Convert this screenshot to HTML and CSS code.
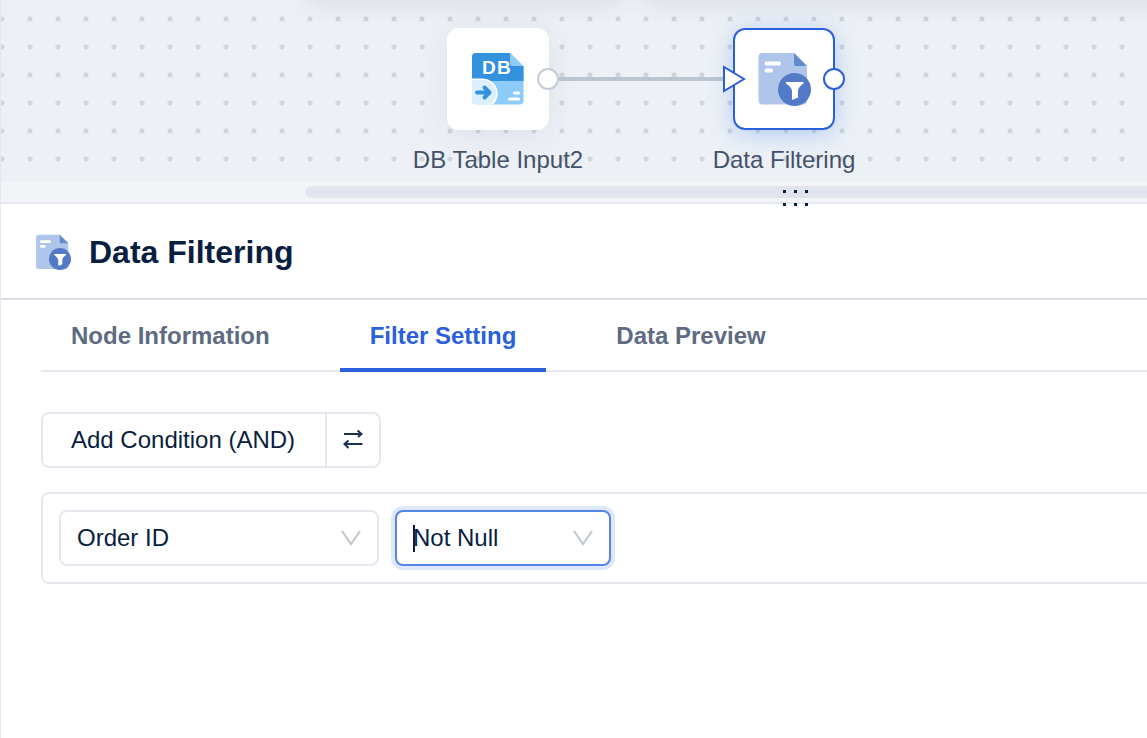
FILE: index.html
```
<!DOCTYPE html>
<html lang="en">
<head>
<meta charset="utf-8">
<title>Data Filtering</title>
<link rel="stylesheet" href="styles.css">
</head>
<body>
<svg class="defs" aria-hidden="true">
  <symbol id="icon-filter-file" viewBox="0 0 54 54">
    <path d="M6 1H37L50 14V48.5a4 4 0 0 1-4 4H5.500a4 4 0 0 1-4-4V5a4 4 0 0 1 4-4z" fill="#afc5e9"/>
    <path d="M37 1L50 14H39a2 2 0 0 1-2-2z" fill="#6489cd"/>
    <path d="M9.500 11.500H22M9.500 18.500H14" stroke="#fff" stroke-width="4" stroke-linecap="round"/>
    <circle cx="37.500" cy="37.500" r="16.500" fill="#537ac6"/>
    <path d="M29 30H46.500V31.500Q41 35 41 39V45.500L35 48V39Q34.500 35 29 31.500z" fill="#fff"/>
  </symbol>
</svg>
<div class="app">
  <section class="canvas" aria-label="Flow canvas">
    <div class="toolbar-shadow toolbar-shadow-left"></div>
    <div class="toolbar-shadow toolbar-shadow-right"></div>
    <div class="edge"></div>
    <div class="node node-input">
      <div class="node-box">
        <svg class="node-icon" viewBox="0 0 54 54" aria-hidden="true">
          <clipPath id="file-clip"><path d="M5 1H39.500L52.500 14V48.500a4 4 0 0 1-4 4H5a4 4 0 0 1-4-4V5a4 4 0 0 1 4-4z"/></clipPath>
          <g clip-path="url(#file-clip)">
            <path d="M0 0H54V54H0z" fill="#8dcbf8"/>
            <path d="M0 0H39V12a2 2 0 0 0 2 2H54V29H0z" fill="#3391dd"/>
            <path d="M0 26.500H11a15 15 0 0 1 9 27.500H0z" fill="#fff"/>
            <path d="M0 28H11a13 13 0 0 1 6 25H0z" fill="#dbf0fe"/>
          </g>
          <path d="M6 40.500H18M13.500 35.500L18.500 40.500L13.500 45.500" fill="none" stroke="#3391dd" stroke-width="4" stroke-linecap="round" stroke-linejoin="round"/>
          <path d="M43.500 41H47.500M38.500 47H47.500" stroke="#fff" stroke-width="3" stroke-linecap="round"/>
          <text class="db-text" x="11 26" y="22">DB</text>
        </svg>
        <span class="port port-out"></span>
      </div>
      <span class="node-label">DB Table Input2</span>
    </div>
    <div class="node node-filter">
      <div class="node-box node-box-active">
        <svg class="node-icon" aria-hidden="true"><use href="#icon-filter-file"/></svg>
        <svg class="port-in" viewBox="0 0 24 28" aria-hidden="true"><path d="M2 2V26L22 14z" fill="#fff" stroke="#2a5fdd" stroke-width="2"/></svg>
        <span class="port port-out port-active"></span>
      </div>
      <span class="node-label">Data Filtering</span>
    </div>
    <div class="scroll-track"><div class="scroll-thumb"></div></div>
    <div class="drag-handle"><i></i><i></i><i></i><i></i><i></i><i></i></div>
  </section>

  <main class="panel">
    <header class="panel-header">
      <svg class="panel-icon" aria-hidden="true"><use href="#icon-filter-file"/></svg>
      <h1 class="panel-title">Data Filtering</h1>
    </header>
    <div class="panel-body">
      <div class="tabs" role="tablist">
        <button class="tab" type="button" role="tab" aria-selected="false">Node Information</button>
        <button class="tab tab-active" type="button" role="tab" aria-selected="true">Filter Setting</button>
        <button class="tab" type="button" role="tab" aria-selected="false">Data Preview</button>
      </div>
      <div class="condition-actions">
        <button class="btn-add" type="button">Add Condition (AND)</button>
        <button class="btn-swap" type="button" aria-label="Switch AND / OR">
          <svg class="swap-icon" viewBox="0 0 20 20" aria-hidden="true"><path d="M1 4H18.500M14.500 0.500L18.500 4L15 7M19.500 14H1.500M5.500 10.500L1.500 14L5.500 18" fill="none" stroke="#1d3050" stroke-width="2"/></svg>
        </button>
      </div>
      <div class="conditions">
        <div class="select-wrap select-field">
          <select class="select" aria-label="Field"><option>Order ID</option></select>
          <svg class="chevron" viewBox="0 0 20 16" aria-hidden="true"><path d="M1 1L10 14L19 1" fill="none" stroke="#bfc5ce" stroke-width="2"/></svg>
        </div>
        <div class="select-wrap select-operator">
          <select class="select select-focused" aria-label="Operator"><option>Not Null</option></select>
          <span class="caret"></span>
          <svg class="chevron" viewBox="0 0 20 16" aria-hidden="true"><path d="M1 1L10 14L19 1" fill="none" stroke="#bfc5ce" stroke-width="2"/></svg>
        </div>
      </div>
    </div>
  </main>
</div>
</body>
</html>
```
FILE: styles.css
```
* { box-sizing: border-box; }

body {
  margin: 0;
  background: #fff;
  color: #091e40;
  font-family: "Liberation Sans", Arial, sans-serif;
  font-size: 24px;
}

button, select { font: inherit; color: inherit; }

.defs { position: absolute; width: 0; height: 0; }

.app {
  display: flex;
  flex-direction: column;
  min-height: 100vh;
  border-left: 1px solid #e4e7f0;
}

.canvas {
  position: relative;
  height: 204px;
  flex: none;
  border-bottom: 2px solid #e5e8f0;
  background-color: #edf1f6;
  background-image: radial-gradient(circle at 14px 14px, #d0d4db 2px, transparent 3px);
  background-size: 28px 28px;
  background-position: -13px 5px;
  overflow-x: clip;
}

.toolbar-shadow {
  position: absolute;
  top: -40px;
  height: 40px;
  box-shadow: 0 4px 24px rgba(40, 50, 80, 0.1);
}
.toolbar-shadow-left { left: 307px; width: 314px; }
.toolbar-shadow-right { left: 643px; right: -40px; }

.edge {
  position: absolute;
  left: 556px;
  top: 77px;
  width: 166px;
  height: 4px;
  background: #bdc5d0;
}

.node {
  position: absolute;
  top: 28px;
  width: 200px;
  display: flex;
  flex-direction: column;
  align-items: center;
  gap: 16px;
}
.node-input { left: 397px; }
.node-filter { left: 683px; }

.node-box {
  position: relative;
  display: grid;
  place-items: center;
  width: 102px;
  height: 102px;
  border-radius: 12px;
  background: #fff;
  box-shadow: 0 4px 32px rgba(40, 50, 80, 0.08);
}
.node-box-active { box-shadow: inset 0 0 0 2px #2a5fdd, 0 4px 24px rgba(42, 120, 235, 0.3); }

.node-icon { width: 54px; height: 54px; }
.db-text { font-size: 19px; font-weight: bold; fill: #fff; }

.port {
  position: absolute;
  right: -10px;
  top: 40px;
  width: 22px;
  height: 22px;
  border: 2px solid #c6cbd9;
  border-radius: 50%;
  background: #fff;
}
.port-active { border-color: #2a5fdd; }
.port-in { position: absolute; left: -11px; top: 37px; width: 24px; height: 28px; }

.node-label { color: #44526b; line-height: 28px; white-space: nowrap; }

.scroll-track {
  position: absolute;
  left: 0;
  right: 0;
  bottom: 0;
  height: 20px;
  padding: 4px 0 4px 304px;
  background: #f3f4f8;
}
.scroll-thumb { height: 12px; border-radius: 6px 0 0 6px; background: #e1e4ec; }

.drag-handle {
  position: absolute;
  left: 782px;
  bottom: -4px;
  display: grid;
  grid-template-columns: repeat(3, 3px);
  gap: 10px 8px;
}
.drag-handle i { height: 3px; background: #091e40; }

.panel-header {
  display: flex;
  align-items: center;
  gap: 18px;
  height: 96px;
  padding: 2px 0 0 34px;
  border-bottom: 2px solid #d8dce5;
}
.panel-icon { width: 36px; height: 36px; }
.panel-title { margin: 0; font-size: 32px; line-height: 40px; }

.panel-body { padding-left: 40px; }

.tabs {
  display: flex;
  gap: 40px;
  height: 72px;
  box-shadow: inset 0 -2px #e5e8f0;
}
.tab {
  padding: 0 30px;
  border: 0;
  background: none;
  color: #5e6b82;
  font-weight: bold;
}
.tab-active { color: #2a5fdd; box-shadow: inset 0 -4px #2a5fdd; }

.condition-actions { display: flex; margin-top: 40px; }
.btn-add, .btn-swap {
  height: 56px;
  border: 2px solid #e5e8f0;
  background: #fff;
}
.btn-add {
  padding: 0 30px 0 28px;
  border-right: 0;
  border-radius: 8px 0 0 8px;
}
.btn-swap {
  display: grid;
  place-items: center;
  width: 56px;
  padding: 0;
  border-radius: 0 8px 8px 0;
}
.swap-icon { width: 20px; height: 20px; }

.conditions {
  display: flex;
  gap: 16px;
  margin-top: 24px;
  padding: 16px;
  border: 2px solid #e5e8f0;
  border-right: 0;
  border-radius: 8px 0 0 8px;
}

.select-wrap { position: relative; height: 56px; }
.select-field { width: 320px; }
.select-operator { width: 216px; }
.select {
  appearance: none;
  width: 100%;
  height: 100%;
  padding: 0 16px 2px;
  border: 2px solid #e5e8f0;
  border-radius: 8px;
  background: #fff;
}
.select-focused { border-color: #5485e8; box-shadow: 0 0 0 4px #dfe7fb; }
.chevron {
  position: absolute;
  right: 18px;
  top: 20px;
  width: 20px;
  height: 16px;
  pointer-events: none;
}
.caret {
  position: absolute;
  left: 18px;
  top: 15px;
  width: 2px;
  height: 27px;
  background: #091e40;
}
```
